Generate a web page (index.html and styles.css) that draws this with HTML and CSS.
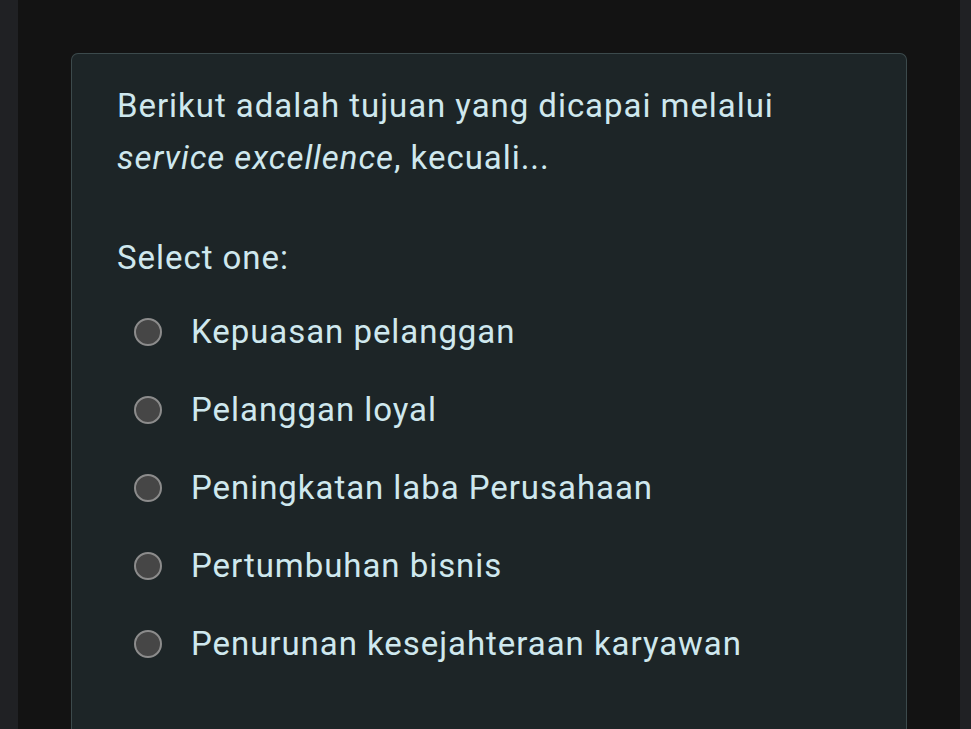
FILE: index.html
```html
<!DOCTYPE html>
<html>
<head>
<meta charset="utf-8">
<link rel="stylesheet" href="styles.css">
</head>
<body>
<div class="page">
  <div class="side side-left"></div>
  <main class="main">
    <section class="card">
      <p class="question">Berikut adalah tujuan yang dicapai melalui <em>service excellence</em>, kecuali...</p>
      <p class="prompt">Select one:</p>
      <ul class="options">
        <li class="option"><span class="radio"></span><span class="label">Kepuasan pelanggan</span></li>
        <li class="option"><span class="radio"></span><span class="label">Pelanggan loyal</span></li>
        <li class="option"><span class="radio"></span><span class="label">Peningkatan laba Perusahaan</span></li>
        <li class="option"><span class="radio"></span><span class="label">Pertumbuhan bisnis</span></li>
        <li class="option"><span class="radio"></span><span class="label">Penurunan kesejahteraan karyawan</span></li>
      </ul>
    </section>
  </main>
  <div class="side side-right"></div>
</div>
</body>
</html>
```
FILE: styles.css
```css
html, body {
  margin: 0;
  padding: 0;
  height: 100%;
  background: #131313;
  overflow: hidden;
}
.page {
  display: flex;
  height: 729px;
  font-family: Roboto, "Noto Sans", sans-serif;
}
.side {
  background: #202124;
  flex: none;
}
.side-left { width: 18px; }
.side-right { width: 11px; }
.main {
  flex: 1;
  padding: 53px 53px 0 53px;
  background: #131313;
}
.card {
  background: #1d2527;
  border: 1px solid #3c4a4c;
  border-bottom: none;
  border-radius: 7px 7px 0 0;
  height: 100%;
  box-sizing: border-box;
  padding: 26px 45px 0 45px;
  color: #cfe8ee;
  font-size: 33px;
  letter-spacing: 0.95px;
  line-height: 52px;
}
.question {
  margin: 0;
  max-width: 680px;
}
.question em {
  font-style: italic;
}
.prompt {
  margin: 48px 0 0 0;
}
.options {
  list-style: none;
  margin: 22px 0 0 0;
  padding: 0;
  display: flex;
  flex-direction: column;
  gap: 26px;
}
.option {
  display: flex;
  align-items: center;
  height: 52px;
}
.radio {
  width: 28px;
  height: 28px;
  box-sizing: border-box;
  border-radius: 50%;
  background: #464646;
  border: 2px solid #8c8c8c;
  margin-left: 17px;
  margin-right: 29px;
  flex: none;
}
```
